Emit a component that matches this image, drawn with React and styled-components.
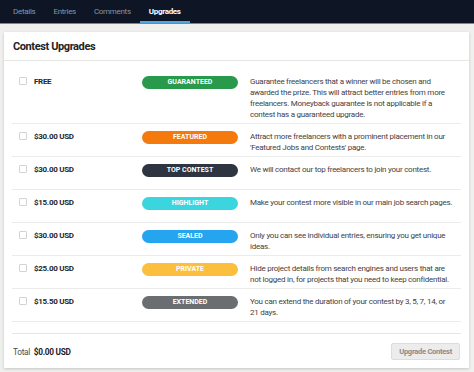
import styled, { createGlobalStyle } from 'styled-components'

const GlobalStyle = createGlobalStyle`
  body {
    margin: 0;
    background: #f0f1ee;
    font-family: Roboto, "Liberation Sans", sans-serif;
    color: #222;
  }
`

const upgrades = [
  { price: 'FREE', name: 'Guaranteed', color: '#29994b', text: 'Guarantee freelancers that a winner will be chosen and awarded the prize. This will attract better entries from more freelancers. Moneyback guarantee is not applicable if a contest has a guaranteed upgrade.' },
  { price: '$30.00 USD', name: 'Featured', color: '#f57a0d', text: "Attract more freelancers with a prominent placement in our 'Featured Jobs and Contests' page." },
  { price: '$30.00 USD', name: 'Top Contest', color: '#2e3540', text: 'We will contact our top freelancers to join your contest.' },
  { price: '$15.00 USD', name: 'Highlight', color: '#3ad5df', text: 'Make your contest more visible in our main job search pages.' },
  { price: '$30.00 USD', name: 'Sealed', color: '#25a4ef', text: 'Only you can see individual entries, ensuring you get unique ideas.' },
  { price: '$25.00 USD', name: 'Private', color: '#fcbf3d', text: 'Hide project details from search engines and users that are not logged in, for projects that you need to keep confidential.' },
  { price: '$15.50 USD', name: 'Extended', color: '#6b6e71', text: 'You can extend the duration of your contest by 3, 5, 7, 14, or 21 days.' },
]

const tabs = ['Details', 'Entries', 'Comments', 'Upgrades']

const App = () => {
  return (
    <>
      <GlobalStyle />
      <NavBar>
        {tabs.map(t => (
          <Tab key={t} active={t === 'Upgrades'}>{t}</Tab>
        ))}
      </NavBar>
      <Card>
        <CardHeader>Contest Upgrades</CardHeader>
        <List>
          {upgrades.map((u, i) => (
            <Row key={i}>
              <Check />
              <Price>{u.price}</Price>
              <Badge color={u.color}>{u.name}</Badge>
              <Desc>{u.text}</Desc>
            </Row>
          ))}
        </List>
        <Footer>
          <Total>Total <strong>$0.00 USD</strong></Total>
          <UpgradeButton>Upgrade Contest</UpgradeButton>
        </Footer>
      </Card>
    </>
  )
}

const NavBar = styled.nav`
  display: flex;
  height: 23px;
  padding-left: 4px;
  background: #0e1525;
  border-bottom: 1px solid #7d8590;
`
const Tab = styled.div`
  display: flex;
  align-items: center;
  padding: 0 9px;
  font-size: 8px;
  letter-spacing: -0.3px;
  font-weight: ${({active}) => (active ? 700 : 400)};
  color: ${({active}) => (active ? '#fff' : '#8c94a3')};
  box-shadow: ${({active}) => (active ? 'inset 0 -2px 0 #4fa6e0' : 'none')};
  cursor: pointer;
`
const Card = styled.section`
  margin: 8px 5px 5px 4px;
  width: 465px;
  background: #fff;
  box-shadow: 0 1px 3px rgba(0, 0, 0, 0.18);
`
const CardHeader = styled.h2`
  margin: 0;
  height: 28px;
  line-height: 29px;
  padding: 0 9px;
  font-size: 11px;
  letter-spacing: -0.4px;
  font-weight: 700;
  color: #1e2227;
  border-bottom: 1px solid #e6e7e4;
`
const List = styled.div`
  padding: 8px 8px 11px;
`
const Row = styled.div`
  display: grid;
  grid-template-columns: 15px 108px 96px 1fr;
  align-items: start;
  padding: 7px 0 3px 7px;
  min-height: 22px;
  border-bottom: 1px solid #ebebea;
`
const Check = styled.span`
  width: 8px;
  height: 8px;
  margin-top: 1px;
  border: 1px solid #d3d3d3;
  box-sizing: border-box;
  border-radius: 1px;
  background: #fff;
`
const Price = styled.div`
  font-size: 8px;
  letter-spacing: -0.3px;
  font-weight: 700;
  line-height: 11px;
  color: #23262b;
`
const Badge = styled.div`
  height: 13px;
  line-height: 13px;
  border-radius: 7px;
  background: ${({color}) => color};
  color: #fff;
  font-size: 7px;
  font-weight: 700;
  text-transform: uppercase;
  text-align: center;
`
const Desc = styled.p`
  margin: 0 0 0 12px;
  max-width: 203px;
  font-size: 8px;
  letter-spacing: -0.25px;
  line-height: 11px;
  color: #3f4246;
`
const Footer = styled.div`
  display: flex;
  justify-content: space-between;
  align-items: center;
  margin: 0 8px;
  padding: 9px 1px 8px;
  border-top: 1px solid #e6e7e4;
`
const Total = styled.div`
  font-size: 8.3px;
  letter-spacing: -0.3px;
  color: #4a4d52;

  strong {
    margin-left: 2px;
    color: #1e2227;
    font-weight: 700;
  }
`
const UpgradeButton = styled.button`
  height: 17px;
  padding: 0 7px;
  border: 1px solid #dcdcdc;
  border-radius: 2px;
  background: #ececec;
  color: #8a8a8a;
  font-family: inherit;
  font-size: 7.5px;
  letter-spacing: -0.25px;
  font-weight: 700;
  cursor: pointer;
`

export default App
